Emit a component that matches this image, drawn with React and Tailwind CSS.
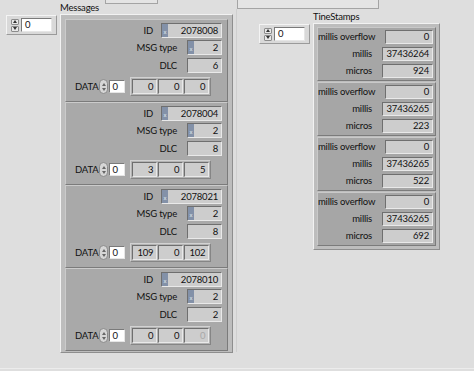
const messages = [
  { id: "2078008", type: "2", dlc: "6", data: ["0", "0", "0"] },
  { id: "2078004", type: "2", dlc: "8", data: ["3", "0", "5"] },
  { id: "2078021", type: "2", dlc: "8", data: ["109", "0", "102"] },
  { id: "2078010", type: "2", dlc: "2", data: ["0", "0", "0"], lastDim: true },
];

const stamps = [
  { overflow: "0", millis: "37436264", micros: "924" },
  { overflow: "0", millis: "37436265", micros: "223" },
  { overflow: "0", millis: "37436265", micros: "522" },
  { overflow: "0", millis: "37436265", micros: "692" },
];

function Field({ value, w, h = "h-[15px]", radix, dim }) {
  return (
    <div
      className={`${w} ${h} flex items-center bg-[#cdcdcd] border border-t-[#6f6f6f] border-l-[#6f6f6f] border-b-[#e9e9e9] border-r-[#e9e9e9]`}
    >
      {radix && (
        <span className="w-[6px] h-full bg-[#8391a8] text-[6px] leading-none text-[#dfe4ec] flex items-end justify-center pb-[2px]">
          x
        </span>
      )}
      <span className={`flex-1 text-right pr-[3px] ${dim ? "text-[#a8a8a8]" : "text-[#111]"}`}>{value}</span>
    </div>
  );
}

function IndexControl() {
  return (
    <div className="w-[51px] h-[20px] flex items-center gap-[2px] px-[4px] bg-[#d9d9d9] border border-t-[#f4f4f4] border-l-[#f4f4f4] border-b-[#9a9a9a] border-r-[#9a9a9a]">
      <div className="w-[8px] h-[13px] flex flex-col gap-px">
        <div className="flex-1 bg-[#e8e8e8] border border-[#8c8c8c] rounded-[1px] flex items-center justify-center">
          <svg width="4" height="3" viewBox="0 0 4 3"><path d="M0 3 L2 0 L4 3 Z" fill="#333" /></svg>
        </div>
        <div className="flex-1 bg-[#e8e8e8] border border-[#8c8c8c] rounded-[1px] flex items-center justify-center">
          <svg width="4" height="3" viewBox="0 0 4 3"><path d="M0 0 L2 3 L4 0 Z" fill="#333" /></svg>
        </div>
      </div>
      <div className="flex-1 h-[14px] bg-white border border-t-[#7a7a7a] border-l-[#7a7a7a] border-b-[#e6e6e6] border-r-[#e6e6e6] pl-[3px] leading-[12px]">
        0
      </div>
    </div>
  );
}

function MessageItem({ m }) {
  return (
    <div className="h-[83px] flex flex-col pt-[3px] bg-[#a9a9a9] border border-t-[#cbcbcb] border-l-[#cbcbcb] border-b-[#7b7b7b] border-r-[#7b7b7b]">
      <div className="h-[15px] flex items-center justify-end gap-[8px] pr-[5px]">
        <span>ID</span>
        <Field value={m.id} w="w-[61px]" radix />
      </div>
      <div className="h-[15px] mt-[2px] flex items-center justify-end gap-[10px] pr-[5px]">
        <span>MSG type</span>
        <Field value={m.type} w="w-[35px]" radix />
      </div>
      <div className="h-[15px] mt-[3px] flex items-center justify-end gap-[10px] pr-[5px]">
        <span>DLC</span>
        <Field value={m.dlc} w="w-[35px]" />
      </div>
      <div className="h-[19px] mt-[4px] flex items-center pl-[9px]">
        <span className="mr-[1px]">DATA</span>
        <div className="w-[9px] h-[15px] rounded-full bg-[#d6d6d6] border border-[#8a8a8a] flex flex-col items-center justify-center gap-[2px]">
          <svg width="4" height="3" viewBox="0 0 4 3"><path d="M0 3 L2 0 L4 3 Z" fill="#666" /></svg>
          <svg width="4" height="3" viewBox="0 0 4 3"><path d="M0 0 L2 3 L4 0 Z" fill="#666" /></svg>
        </div>
        <div className="ml-[1px] w-[16px] h-[13px] bg-white border border-t-[#7a7a7a] border-l-[#7a7a7a] border-b-[#e6e6e6] border-r-[#e6e6e6] pl-[2px] leading-[11px]">
          0
        </div>
        <div className="ml-[5px] w-[81px] h-[19px] flex items-center gap-px px-[1px] bg-[#b3b3b3] border border-t-[#d2d2d2] border-l-[#d2d2d2] border-b-[#858585] border-r-[#858585]">
          {m.data.map((d, i) => (
            <Field key={i} value={d} w="flex-1" dim={m.lastDim && i === 2} />
          ))}
        </div>
      </div>
    </div>
  );
}

function StampItem({ s }) {
  const rows = [
    ["millis overflow", s.overflow],
    ["millis", s.millis],
    ["micros", s.micros],
  ];
  return (
    <div className="h-[54px] flex flex-col gap-[3px] pt-[2px] bg-[#a6a6a6] border border-t-[#c9c9c9] border-l-[#c9c9c9] border-b-[#7b7b7b] border-r-[#7b7b7b]">
      {rows.map(([label, v]) => (
        <div key={label} className="h-[14px] flex items-center justify-end gap-[10px] pr-[2px]">
          <span>{label}</span>
          <Field value={v} w="w-[51px]" h="h-[14px]" />
        </div>
      ))}
    </div>
  );
}

export default function App() {
  return (
    <div className="w-[474px] h-[371px] overflow-hidden bg-[#dedede] font-['Lato',sans-serif] text-[9.5px] tracking-[-0.2px] leading-[12px] text-[#111] whitespace-nowrap flex flex-col">
      <div className="flex flex-1">
        {/* messages side */}
        <div className="w-[236px] flex items-start">
          <div className="mt-[15px] ml-[6px]">
            <IndexControl />
          </div>
          <div className="ml-[3px] flex flex-col">
            <div className="flex items-start h-[14px]">
              <span className="w-[45px] pt-[2px]">Messages</span>
              <div className="w-[53px] h-[4px] bg-[#e4e4e4] border border-t-0 border-[#a4a4a4]" />
            </div>
            <div className="w-[173px] h-[339px] flex flex-col px-[4px] pt-[4px] bg-[#bdbdbd] border border-t-[#f2f2f2] border-l-[#f2f2f2] border-b-[#8e8e8e] border-r-[#8e8e8e]">
              {messages.map((m) => (
                <MessageItem key={m.id} m={m} />
              ))}
            </div>
          </div>
        </div>
        <div className="w-px mt-[9px] h-[343px] bg-[#cfcfcf]" />
        {/* timestamps side */}
        <div className="flex flex-col items-start">
          <div className="w-[142px] h-[9px] bg-[#e4e4e4] border border-t-0 border-[#a4a4a4]" />
          <div className="flex items-start">
            <div className="mt-[15px] ml-[22px]">
              <IndexControl />
            </div>
            <div className="ml-[3px] flex flex-col">
              <span className="h-[14px] pt-[2px]">TineStamps</span>
              <div className="w-[127px] h-[227px] flex flex-col gap-px px-[3px] pt-[3px] bg-[#bdbdbd] border border-t-[#f2f2f2] border-l-[#f2f2f2] border-b-[#8e8e8e] border-r-[#8e8e8e]">
                {stamps.map((s, i) => (
                  <StampItem key={i} s={s} />
                ))}
              </div>
            </div>
          </div>
        </div>
      </div>
      <div className="h-[3px] border-t border-[#ececec]" />
    </div>
  );
}
